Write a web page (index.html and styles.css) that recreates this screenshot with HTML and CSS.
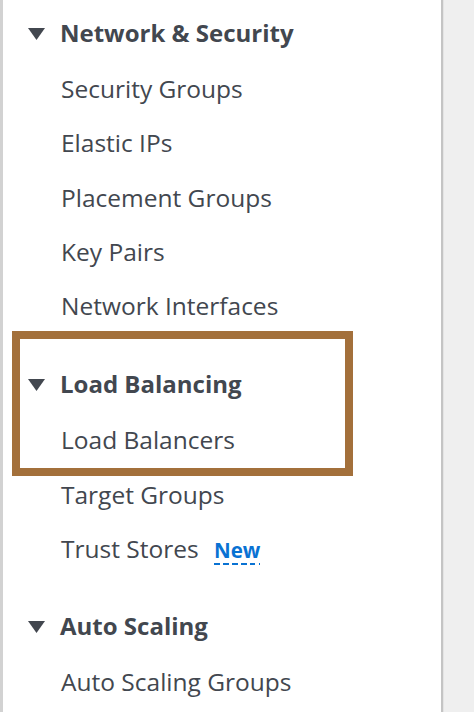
FILE: index.html
```html
<!DOCTYPE html>
<html lang="en">
<head>
<meta charset="utf-8">
<title>EC2 navigation</title>
<link rel="stylesheet" href="styles.css">
</head>
<body>
<div class="layout">
  <nav class="side-nav">
    <section class="nav-section">
      <div class="nav-heading">
        <svg class="caret" width="17" height="12" viewBox="0 0 17 12"><path d="M0 0H17L8.5 12Z" fill="#42474f"/></svg>
        <span>Network &amp; Security</span>
      </div>
      <ul class="nav-list">
        <li>Security Groups</li>
        <li>Elastic IPs</li>
        <li>Placement Groups</li>
        <li>Key Pairs</li>
        <li>Network Interfaces</li>
      </ul>
    </section>
    <section class="nav-section">
      <div class="nav-heading">
        <svg class="caret" width="17" height="12" viewBox="0 0 17 12"><path d="M0 0H17L8.5 12Z" fill="#42474f"/></svg>
        <span>Load Balancing</span>
      </div>
      <ul class="nav-list">
        <li>Load Balancers</li>
        <li>Target Groups</li>
        <li class="with-badge">Trust Stores <span class="badge">New</span></li>
      </ul>
    </section>
    <section class="nav-section">
      <div class="nav-heading">
        <svg class="caret" width="17" height="12" viewBox="0 0 17 12"><path d="M0 0H17L8.5 12Z" fill="#42474f"/></svg>
        <span>Auto Scaling</span>
      </div>
      <ul class="nav-list">
        <li>Auto Scaling Groups</li>
      </ul>
    </section>
    <div class="highlight" aria-hidden="true"></div>
  </nav>
  <div class="main-area"></div>
</div>
</body>
</html>
```
FILE: styles.css
```css
html, body {
  margin: 0;
  padding: 0;
  height: 100%;
}
body {
  font-family: "Open Sans", "Noto Sans", sans-serif;
  color: #42474f;
  background: #efefef;
}
.layout {
  display: flex;
  height: 712px;
  overflow: hidden;
}
.side-nav {
  position: relative;
  width: 416px;
  flex: none;
  background: #ffffff;
  border-left: 3px solid #d2d2d2;
  border-right: 2px solid #c4c4c4;
  padding: 4px 0 0 22px;
  box-sizing: content-box;
}
.main-area {
  flex: 1;
  background: #efefef;
  border-left: 1px solid #e4e4e4;
}
.nav-section + .nav-section {
  margin-top: 22px;
}
.nav-section:last-of-type {
  margin-top: 21px;
}
.nav-heading {
  display: flex;
  align-items: center;
  height: 58px;
  font-size: 24px;
  font-weight: 700;
  line-height: 58px;
}
.caret {
  flex: none;
  margin: 1px 15px 0 3px;
}
.nav-list {
  list-style: none;
  margin: 0;
  padding: 0 0 0 36px;
}
.nav-list li {
  height: 54.25px;
  line-height: 54.25px;
  font-size: 24.5px;
  white-space: nowrap;
}
.badge {
  display: inline-block;
  margin-left: 9px;
  font-size: 20.5px;
  font-weight: 700;
  color: #0972d3;
  line-height: 26px;
  padding-bottom: 2px;
  background-image: repeating-linear-gradient(to right, #0972d3 0 5.5px, transparent 5.5px 9px);
  background-size: 100% 2px;
  background-position: left bottom;
  background-repeat: no-repeat;
  vertical-align: baseline;
}
.highlight {
  position: absolute;
  left: 9px;
  top: 331px;
  width: 325px;
  height: 129px;
  border: 8px solid #a3703b;
}
```
